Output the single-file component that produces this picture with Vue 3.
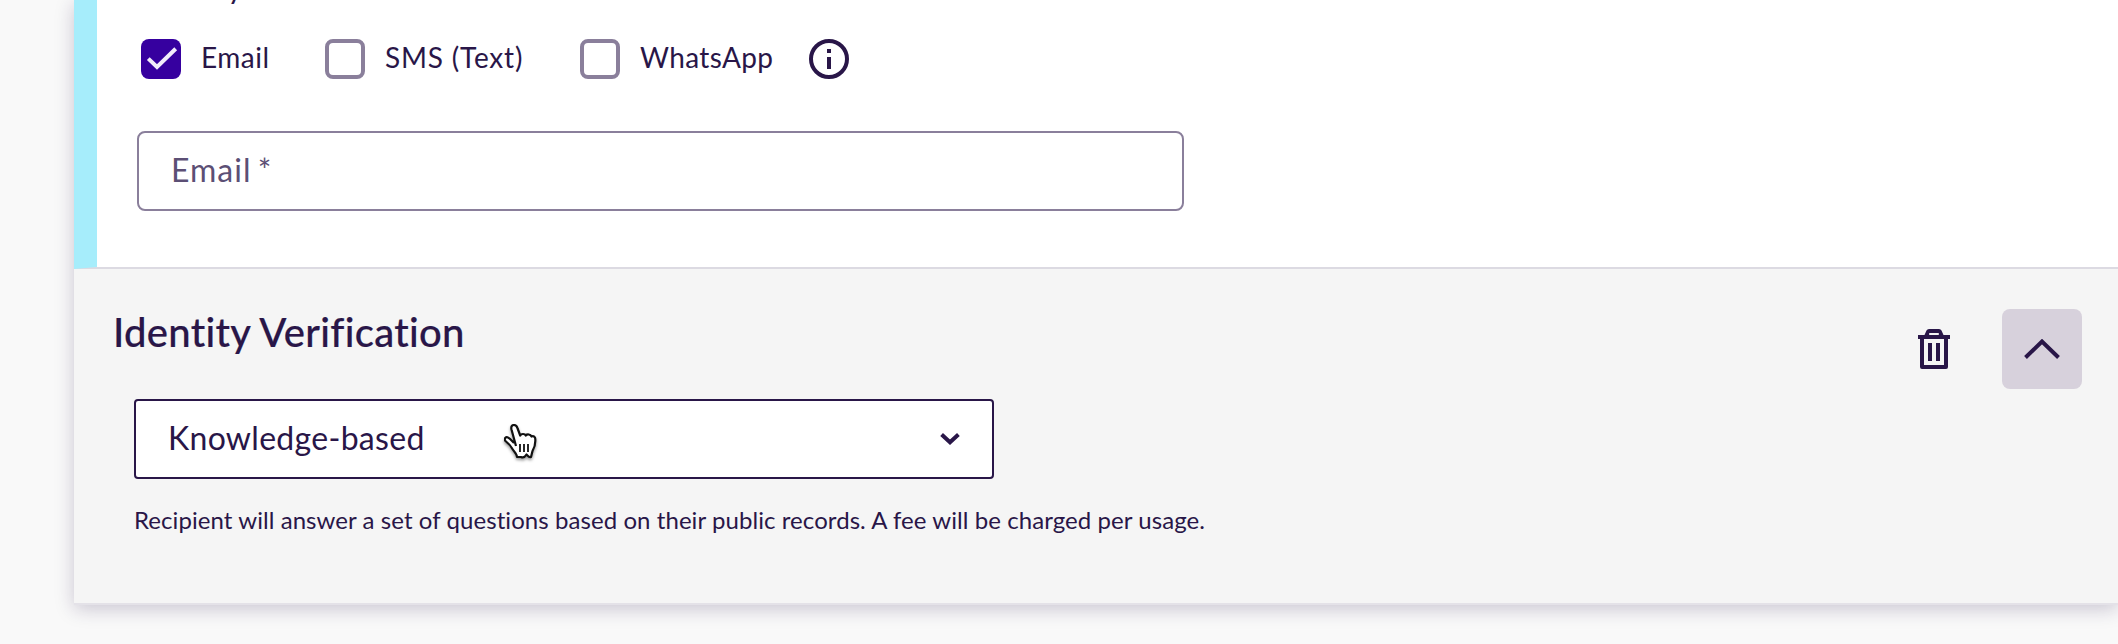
<script setup>
import { ref, reactive } from "vue";

const channels = reactive([
  { value: "email",    label: "Email",      checked: true },
  { value: "sms",      label: "SMS (Text)", checked: false },
  { value: "whatsapp", label: "WhatsApp",   checked: false }
]);

const method = ref("Knowledge-based");
</script>

<template>
  <div class="page">
    <div class="card">
      <section class="delivery">
        <div class="delivery-title">Delivery</div>
        <div class="channels">
          <label v-for="c in channels" :key="c.value" class="channel" :class="c.value">
            <input v-model="c.checked" class="channel-input" type="checkbox" />
            <span class="box" :class="{ checked: c.checked }">
              <svg v-if="c.checked" width="40" height="40" viewBox="0 0 40 40">
                <path d="M7.3 19.6 L16 28 L34.7 9.7" fill="none" stroke="#f1ecfa" stroke-width="4" />
              </svg>
            </span>
            <span class="channel-label">{{ c.label }}</span>
          </label>
          <svg class="info" width="40" height="40" viewBox="0 0 40 40">
            <circle cx="20" cy="20" r="18" fill="none" stroke="#291648" stroke-width="4" />
            <path d="M18 10h4v4h-4zM18 18h4v12h-4z" fill="#291648" />
          </svg>
        </div>
        <div class="email-field"><span class="email-label">Email *</span></div>
      </section>

      <section class="verify">
        <div class="verify-main">
          <h2 class="verify-title">Identity Verification</h2>
          <div class="select">
            <span class="select-value">{{ method }}</span>
            <svg class="select-arrow" width="20" height="12" viewBox="0 0 20 12">
              <path d="M1.6 1.5 L10 9.2 L18.4 1.5" fill="none" stroke="#291648" stroke-width="4" />
            </svg>
          </div>
          <p class="hint">Recipient will answer a set of questions based on their public records. A fee will be charged per usage.</p>
        </div>
        <div class="actions">
          <svg width="32" height="40" viewBox="0 0 32 40">
            <path d="M0 6h6.5l2-4.4Q9.2 0 11 0h10q1.8 0 2.5 1.6L25.5 6H32v4H0z M11.2 4v2h9.6V4z" fill="#291648" fill-rule="evenodd" />
            <path d="M4 9v29h24V9" fill="none" stroke="#291648" stroke-width="4" stroke-linejoin="round" />
            <path d="M10 14h4v18h-4zM18 14h4v18h-4z" fill="#291648" />
          </svg>
          <button class="collapse" type="button">
            <svg width="36" height="20" viewBox="0 0 36 20">
              <path d="M1.5 18.5 L18 2.5 L34.5 18.5" fill="none" stroke="#291648" stroke-width="4" />
            </svg>
          </button>
        </div>
      </section>
    </div>

    <!-- pointer resting on the select -->
    <svg class="pointer" width="36" height="40" viewBox="0 0 36 40">
      <path
        d="M12 22 L7.5 5.5 C6.8 2.5 8 1 10 1 C12 1 13 2.5 13.6 4.5 L16.2 11.5 C17 9.5 21 9.5 21.8 11.5 C23 10 26.5 10 27.4 12.5 C29.5 11.5 31.5 13 31.3 15.5 C31.6 21 31 23 28.5 27 L27 33 C25 33.6 24 32 22.5 30.5 C21 33 19 34 17 33 H13 C13 30 10 27.5 8.5 25 C6.5 21 4 19 1.5 17 C-0.5 14.5 2 12.5 4 13.5 C6.5 14.5 8 17 10 19"
        fill="#fff" stroke="#111" stroke-width="2.2" stroke-linejoin="round"
      />
      <path d="M16 20v8M20 20v8M24 20v8" stroke="#111" stroke-width="1.8" />
    </svg>
  </div>
</template>

<style>
body {
  margin: 0;
}
</style>

<style scoped>
.page {
  position: relative;
  box-sizing: border-box;
  height: 644px;
  padding-left: 74px;
  overflow: hidden;
  background: #f9f9f9;
  color: #291648;
  font-family: Lato, "Liberation Sans", sans-serif;
  font-variant-ligatures: none;
}
.card {
  height: 605px;
  box-shadow: 0 4px 18px rgba(38, 19, 74, 0.22);
}
.delivery {
  box-sizing: border-box;
  height: 269px;
  border-left: 23px solid #a6edfb;
  border-bottom: 2px solid #dcdae2;
  padding-left: 40px;
  background: #fff;
  overflow: hidden;
}
/* scrolled almost out of view, only the descender remains */
.delivery-title {
  height: 39px;
  margin: -29px 0 29px 2px;
  font-size: 28px;
  font-weight: 500;
  line-height: 34px;
}
.channels {
  display: flex;
  margin-left: 4px;
}
.channel {
  display: flex;
  align-items: center;
  gap: 20px;
  height: 40px;
}
.channel.email {
  width: 184px;
  letter-spacing: 0.5px;
}
.channel.sms {
  width: 255px;
  letter-spacing: 0.8px;
}
.channel.whatsapp {
  width: 229px;
  letter-spacing: 0.35px;
}
.channel-input {
  display: none;
}
.box {
  box-sizing: border-box;
  flex: none;
  width: 40px;
  height: 40px;
  border: 4px solid #8a7f9b;
  border-radius: 8px;
}
.box.checked {
  border: 0;
  background: #36009f;
}
.box svg {
  display: block;
}
.channel-label {
  font-size: 28px;
  line-height: 40px;
  white-space: nowrap;
  margin-top: -4px;
}
.email-field {
  box-sizing: border-box;
  display: flex;
  align-items: center;
  width: 1047px;
  height: 80px;
  margin-top: 52px;
  padding: 0 32px 4px;
  border: 2px solid #8a7f9b;
  border-radius: 8px;
  color: #5c4f75;
  font-size: 32px;
  letter-spacing: 1px;
  word-spacing: -3px;
}
.verify {
  box-sizing: border-box;
  display: flex;
  justify-content: space-between;
  height: 336px;
  padding: 40px 36px 0 38px;
  border-bottom: 2px solid #e4e2e8;
  background: #f5f5f5;
}
.verify-title {
  margin: -1px 0 0 1px;
  height: 49px;
  font-size: 40px;
  font-weight: 500;
  line-height: 48px;
  letter-spacing: 0.3px;
  -webkit-text-stroke: 0.2px #291648;
}
.select {
  box-sizing: border-box;
  display: flex;
  align-items: center;
  justify-content: space-between;
  width: 860px;
  height: 80px;
  margin: 42px 0 0 22px;
  padding: 0 32px;
  border: 2px solid #291648;
  border-radius: 4px;
  background: #fff;
  font-size: 32px;
}
.select-value {
  padding-bottom: 3px;
  letter-spacing: 0.3px;
}
.hint {
  margin: 23px 0 0 22px;
  font-size: 24px;
  line-height: 36px;
  letter-spacing: 0.07px;
  white-space: nowrap;
}
.actions {
  display: flex;
  align-items: center;
  gap: 52px;
  height: 80px;
}
.collapse {
  display: flex;
  align-items: center;
  justify-content: center;
  width: 80px;
  height: 80px;
  padding: 0;
  border: 0;
  border-radius: 8px;
  background: #d7d1dc;
}
.pointer {
  position: absolute;
  left: 504px;
  top: 424px;
  filter: drop-shadow(0 2px 1.5px rgba(0, 0, 0, 0.4));
}
</style>
